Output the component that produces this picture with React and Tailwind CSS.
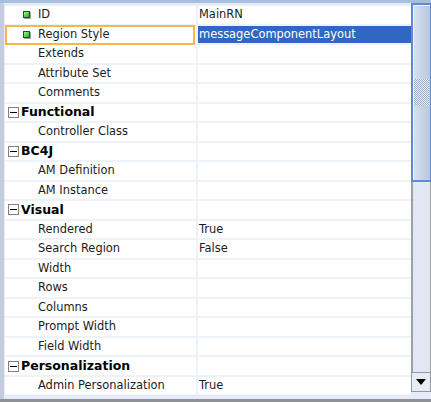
import React from "react";

const rows = [
  { k: "ID", v: "MainRN", dot: true },
  { k: "Region Style", v: "messageComponentLayout", dot: true, sel: true },
  { k: "Extends" },
  { k: "Attribute Set" },
  { k: "Comments" },
  { k: "Functional", h: true },
  { k: "Controller Class" },
  { k: "BC4J", h: true },
  { k: "AM Definition" },
  { k: "AM Instance" },
  { k: "Visual", h: true },
  { k: "Rendered", v: "True" },
  { k: "Search Region", v: "False" },
  { k: "Width" },
  { k: "Rows" },
  { k: "Columns" },
  { k: "Prompt Width" },
  { k: "Field Width" },
  { k: "Personalization", h: true },
  { k: "Admin Personalization", v: "True" },
];

function Dot() {
  return (
    <span className="w-[7px] h-[7px] bg-gradient-to-br from-[#8dff8d] to-[#10b010] border border-[#2a4a2a] shadow-[1px_1px_0_#9aa89a] block" />
  );
}

function Minus() {
  return (
    <span className="w-[11px] h-[11px] shrink-0 border border-[#808080] bg-white flex items-center justify-center">
      <span className="w-[7px] h-px bg-black block" />
    </span>
  );
}

function Row({ r }) {
  return (
    <div className="h-[19.53px] flex border-b-2 border-[#eef2fa] text-[11.45px] text-[#1c1c1c]">
      <div className={`w-[190px] shrink-0 flex items-center ${r.sel ? "border-2 border-[#f5b64a] -mt-[1px] h-[20px]" : ""}`}>
        {r.h ? (
          <div className="flex items-center pl-[3px] gap-[2px]">
            <Minus />
            <span className="font-bold text-[12.5px] text-black whitespace-nowrap">{r.k}</span>
          </div>
        ) : (
          <div className={`flex items-center w-full ${r.sel ? "-ml-[2px]" : ""}`}>
            <div className="w-[33px] shrink-0 flex justify-end pr-[8px]">{r.dot && <Dot />}</div>
            <span className="whitespace-nowrap">{r.k}</span>
          </div>
        )}
      </div>
      <div className="w-px shrink-0" />
      <div className={`flex-1 border-l-2 border-[#eef2fa] pl-px flex items-center ${r.sel ? "bg-[#2f68c2] text-white" : ""}`}>
        {r.v}
      </div>
    </div>
  );
}

export default function App() {
  return (
    <div className="w-[431px] h-[402px] bg-[#e6ebf7] overflow-hidden" style={{ fontFamily: '"DejaVu Sans", Tahoma, sans-serif' }}>
      <div className="h-[3px] bg-[#a6bfdf]" />
      <div className="flex h-[396px]">
        <div className="w-[4px] bg-[#c4cddd] shrink-0" />
        <div className="w-[407px] shrink-0 pt-[3px] pl-px">
          <div className="bg-white h-[389px] overflow-hidden">
            {rows.map((r) => <Row key={r.k} r={r} />)}
          </div>
        </div>
        <div className="w-[20px] shrink-0 flex flex-col h-[389px]">
          <div className="h-[179px] shrink-0 border-2 border-[#5f8bd3] border-r-1 bg-gradient-to-r from-[#d8e1ef] to-[#b8c8df] shadow-[inset_1px_1px_0_#eef2fa] flex items-center justify-center">
            <span className="w-[15px] h-[27px] block bg-[repeating-conic-gradient(#9fb0c9_0_25%,#e6ecf6_0_50%)] bg-[length:2px_2px]" />
          </div>
          <div className="flex-1 bg-[#e2e7f4] border-x-2 border-[#a0a0a0] border-r-1" />
          <div className="h-[20px] shrink-0 bg-[#e8ecf5] border border-[#8e9aa8] flex items-center justify-center">
            <svg width="10" height="6" viewBox="0 0 10 6"><path d="M0 0h10L5 6z" fill="#000" /></svg>
          </div>
        </div>
      </div>
      <div className="h-[3px] bg-[#8f9097]" />
    </div>
  );
}
